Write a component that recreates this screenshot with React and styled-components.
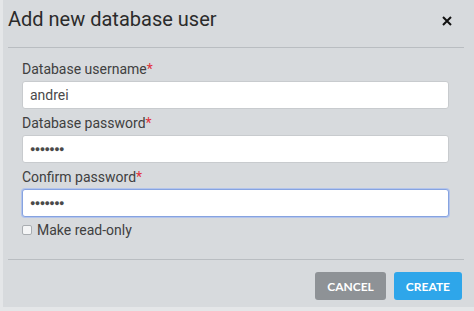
import React from "react";
import styled, { createGlobalStyle } from "styled-components";

const Global = createGlobalStyle`
  html, body { margin: 0; padding: 0; background: #e4e6e8; }
  body { font-family: Roboto, "Liberation Sans", sans-serif; }
  * { box-sizing: border-box; }
`;

const Page = styled.div`
  width: 474px;
  height: 311px;
  padding: 0 0 4px 3px;
  display: flex;
`;

const Modal = styled.div`
  flex: 1;
  background: #d7dadd;
  display: flex;
  flex-direction: column;
  padding: 0 10px 7px 5px;
`;

const Header = styled.div`
  height: 48px;
  display: flex;
  align-items: flex-start;
  justify-content: space-between;
  border-bottom: 1px solid #b9bdc1;
  padding: 7px 11px 0 0;
`;

const Title = styled.h2`
  margin: 0;
  font-size: 20px;
  font-weight: 400;
  color: #2b2b2b;
  line-height: 24px;
`;

const Close = styled.button`
  border: 0;
  background: none;
  padding: 0;
  width: 12px;
  height: 12px;
  display: flex;
  align-items: center;
  justify-content: center;
  cursor: pointer;
  margin-top: 8px;
`;

const Body = styled.div`
  flex: 1;
  padding: 11px 15px 0 14px;
  display: flex;
  flex-direction: column;
`;

const Field = styled.div`
  display: flex;
  flex-direction: column;
  margin-bottom: 4px;
`;

const Label = styled.label`
  font-size: 14px;
  line-height: 20px;
  color: #404040;
  margin-bottom: 2px;
`;

const Req = styled.span`
  color: #e0313b;
`;

const Input = styled.input`
  height: 28px;
  width: 100%;
  border: 1px solid ${(p) => (p.$focus ? "#86a3e0" : "#c8cbce")};
  box-shadow: ${(p) => (p.$focus ? "0 0 0 1px #b3c4ec" : "none")};
  border-radius: 3px;
  background: #fff;
  padding: 0 7px;
  font-family: Roboto, "Liberation Sans", sans-serif;
  font-size: ${(p) => (p.$dots ? "9px" : "14px")};
  letter-spacing: ${(p) => (p.$dots ? "-0.6px" : "0")};
  color: #4a4a4a;
  outline: none;
`;

const CheckRow = styled.label`
  display: flex;
  align-items: center;
  gap: 5px;
  font-size: 14px;
  line-height: 18px;
  color: #404040;
`;

const Box = styled.span`
  width: 10px;
  height: 10px;
  border: 1px solid #a9adb1;
  border-radius: 2px;
  background: #f4f5f6;
  display: inline-block;
`;

const Footer = styled.div`
  border-top: 1px solid #b9bdc1;
  padding: 12px 2px 0 0;
  display: flex;
  justify-content: flex-end;
  gap: 8px;
`;

const Button = styled.button`
  height: 28px;
  border: 0;
  border-radius: 3px;
  padding: 0 12px;
  background: ${(p) => (p.$primary ? "#2ea6ea" : "#8e9296")};
  color: #fff;
  font-family: Lato, "Liberation Sans", sans-serif;
  font-weight: 700;
  font-size: 12px;
  text-transform: uppercase;
  cursor: pointer;
`;

export default function App() {
  return (
    <Page>
      <Global />
      <Modal>
        <Header>
          <Title>Add new database user</Title>
          <Close aria-label="Close">
            <svg width="10" height="10" viewBox="0 0 10 10">
              <path d="M1 1L9 9M9 1L1 9" stroke="#111" strokeWidth="2" />
            </svg>
          </Close>
        </Header>
        <Body>
          <Field>
            <Label>Database username<Req>*</Req></Label>
            <Input defaultValue="andrei" />
          </Field>
          <Field>
            <Label>Database password<Req>*</Req></Label>
            <Input $dots defaultValue="●●●●●●●" readOnly />
          </Field>
          <Field>
            <Label>Confirm password<Req>*</Req></Label>
            <Input $dots $focus defaultValue="●●●●●●●" readOnly />
          </Field>
          <CheckRow>
            <Box />
            Make read-only
          </CheckRow>
        </Body>
        <Footer>
          <Button>Cancel</Button>
          <Button $primary>Create</Button>
        </Footer>
      </Modal>
    </Page>
  );
}
